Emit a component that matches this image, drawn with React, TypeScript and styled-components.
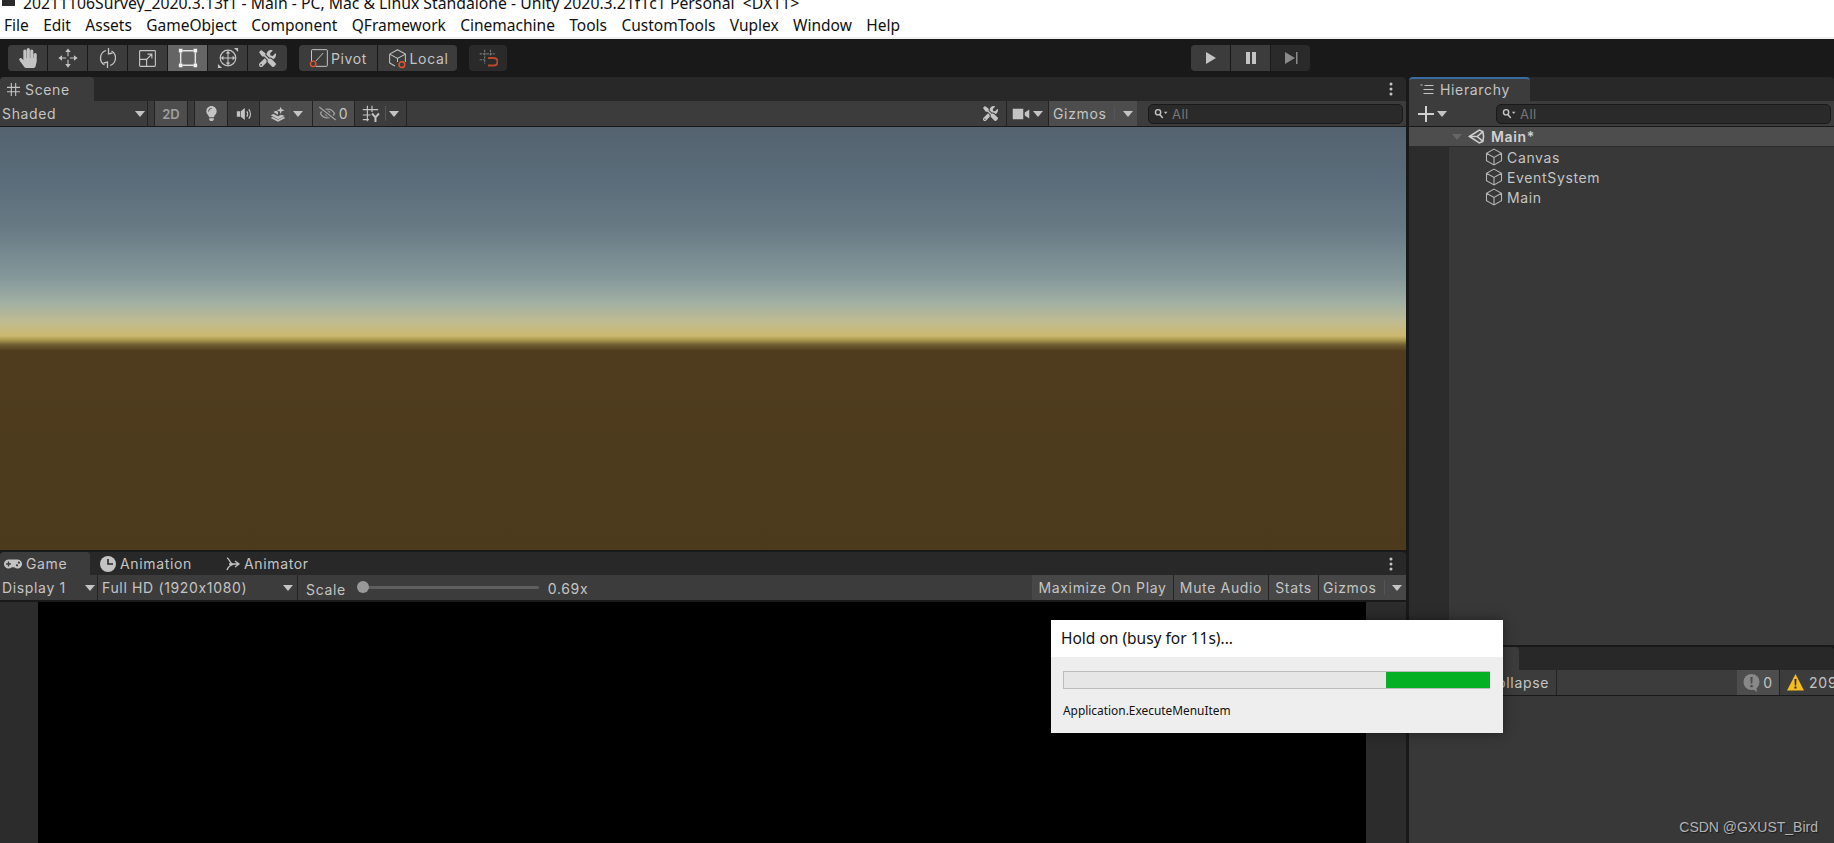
import React from "react"
import styled, { createGlobalStyle } from "styled-components"
import { FaHandPaper, FaTools, FaGamepad, FaLightbulb, FaRegEyeSlash } from "react-icons/fa"

const GlobalStyle = createGlobalStyle`
  html, body {
    margin: 0;
    padding: 0;
    background: #191919;
    overflow: hidden;
  }
  * {
    box-sizing: border-box;
  }
`

const Page = styled.div`
  position: relative;
  width: 1834px;
  height: 843px;
  display: flex;
  flex-direction: column;
  overflow: hidden;
  font-family: Inter, "Liberation Sans", sans-serif;
  font-size: 14px;
  color: #c4c4c4;
`

const TitleBar = styled.div`
  height: 12px;
  flex: none;
  display: flex;
  align-items: flex-end;
  gap: 8px;
  padding-left: 2px;
  background: #fff;
  overflow: hidden;
`

const TitleIcon = styled.span`
  width: 13px;
  height: 6px;
  margin-bottom: 6px;
  background: #2b2b2b;
`

const TitleText = styled.span`
  font-family: "Noto Sans", sans-serif;
  font-size: 15.75px;
  line-height: 18px;
  color: #111;
  white-space: pre;
`

const MenuBar = styled.div`
  height: 27px;
  flex: none;
  display: flex;
  align-items: center;
  gap: 14.4px;
  padding: 1px 0 0 4px;
  background: #fff;
  border-bottom: 2px solid #f0f0f0;
`

const MenuItem = styled.span`
  font-family: "Noto Sans", sans-serif;
  font-size: 15.5px;
  color: #111;
`

const MainToolbar = styled.div`
  height: 38px;
  flex: none;
  display: flex;
  align-items: center;
  padding-left: 8px;
  background: #191919;
`

const ToolGroup = styled.div<{ $gap?: number }>`
  display: flex;
  gap: 1px;
  height: 26px;
  margin-left: ${(p) => p.$gap ?? 0}px;
  border-radius: 4px;
  overflow: hidden;
`

const ToolButton = styled.div<{ $w: number; $active?: boolean; $dim?: boolean }>`
  width: ${(p) => p.$w}px;
  display: flex;
  align-items: center;
  justify-content: center;
  gap: 2px;
  color: #c4c4c4;
  letter-spacing: 0.65px;
  background: ${(p) => (p.$active ? "#656565" : p.$dim ? "#2a2a2a" : "#3c3c3c")};
`

const Workspace = styled.div`
  flex: 1;
  display: flex;
  gap: 3px;
  min-height: 0;
  background: #191919;
`

const LeftColumn = styled.div`
  width: 1406px;
  flex: none;
  display: flex;
  flex-direction: column;
  gap: 2px;
`

const RightColumn = styled.div`
  flex: 1;
  display: flex;
  flex-direction: column;
  gap: 2px;
  min-width: 0;
`

const Panel = styled.section<{ $h?: number }>`
  display: flex;
  flex-direction: column;
  min-height: 0;
  ${(p) => (p.$h ? `height: ${p.$h}px; flex: none;` : "flex: 1;")}
`

const TabRow = styled.div<{ $h: number }>`
  height: ${(p) => p.$h}px;
  flex: none;
  display: flex;
  align-items: stretch;
  background: #282828;
  border-radius: 4px 4px 0 0;
`

const Tab = styled.div<{ $w: number; $active?: boolean; $blue?: boolean; $pad?: number; $gap?: number }>`
  width: ${(p) => p.$w}px;
  display: flex;
  align-items: center;
  gap: ${(p) => p.$gap ?? 4}px;
  padding-left: ${(p) => p.$pad ?? 5}px;
  padding-bottom: 2px;
  background: ${(p) => (p.$active ? "#3c3c3c" : "transparent")};
  border-top: 2px solid ${(p) => (p.$blue ? "#3a6d9f" : "transparent")};
  border-radius: 4px 4px 0 0;
  color: #c4c4c4;
  letter-spacing: 0.65px;
`

const Kebab = styled.div`
  margin-left: auto;
  margin-right: 13px;
  display: flex;
  align-items: center;
`

const Row = styled.div<{ $h: number }>`
  height: ${(p) => p.$h}px;
  flex: none;
  display: flex;
  align-items: stretch;
  background: #3c3c3c;
  border-bottom: 1px solid #191919;
`

const Cell = styled.div<{ $w?: number; $bg?: string; $plain?: boolean; $pad?: number; $between?: boolean }>`
  width: ${(p) => (p.$w ? `${p.$w}px` : "auto")};
  flex: none;
  display: flex;
  align-items: center;
  justify-content: ${(p) => (p.$between ? "space-between" : "center")};
  gap: 3px;
  padding: 0 ${(p) => p.$pad ?? 0}px;
  background: ${(p) => p.$bg ?? "transparent"};
  border-right: ${(p) => (p.$plain ? "none" : "1px solid #232323")};
  letter-spacing: 0.65px;
  white-space: nowrap;
`

const LeftCell = styled(Cell)`
  justify-content: flex-start;
`

const EndCell = styled(Cell)`
  justify-content: flex-end;
`

const DimText = styled.span`
  color: #a0a0a0;
  font-size: 13px;
  font-weight: 600;
  letter-spacing: 0;
`

const ScaleLabel = styled.span`
  margin-top: 3px;
`

const ScaleValue = styled.span`
  margin-left: 6px;
  margin-top: 1px;
`

const Divider = styled.span`
  width: 1px;
  height: 15px;
  background: #555;
`

const Caret = styled.span<{ $dim?: boolean }>`
  width: 0;
  height: 0;
  flex: none;
  border-left: 5px solid transparent;
  border-right: 5px solid transparent;
  border-top: 6px solid ${(p) => (p.$dim ? "#666" : "#c4c4c4")};
`

const Spacer = styled.div`
  flex: 1;
`

const SearchField = styled.div<{ $w?: number; $left: number }>`
  ${(p) => (p.$w ? `width: ${p.$w}px; flex: none;` : "flex: 1;")}
  height: 20px;
  align-self: center;
  display: flex;
  align-items: center;
  gap: 4px;
  margin: 0 3px 0 ${(p) => p.$left}px;
  padding-left: 5px;
  background: #2a2a2a;
  border: 1px solid #191919;
  border-radius: 5px;
  font-size: 13px;
  letter-spacing: 0.5px;
  color: #777;
`

const SceneView = styled.div`
  flex: 1;
  background: linear-gradient(
    180deg,
    #54636f 0,
    #5a6b79 50px,
    #677a84 100px,
    #84979a 150px,
    #a0afa3 175px,
    #c0bc92 195px,
    #cbb86f 209px,
    #a8984f 213px,
    #6e5c32 218px,
    #4f3c1e 224px,
    #4c3a1c 100%
  );
`

const GameView = styled.div`
  flex: 1;
  margin-top: 1px;
  padding: 0 40px 0 38px;
  background: #2c2c2c;
`

const GameBlack = styled.div`
  height: 100%;
  background: #000;
`

const Slider = styled.div`
  position: relative;
  width: 181px;
  height: 3px;
  margin-left: 9px;
  background: #5f5f5f;
  border-radius: 2px;
`

const SliderThumb = styled.span`
  position: absolute;
  left: -1px;
  top: -5px;
  width: 12px;
  height: 12px;
  border-radius: 50%;
  background: #999;
`

const SelectedRow = styled.div`
  height: 20px;
  flex: none;
  display: flex;
  align-items: center;
  padding-left: 43px;
  gap: 6px;
  background: #4d4d4d;
  border-bottom: 1px solid #2c2c2c;
  font-weight: 600;
  color: #d2d2d2;
  letter-spacing: 0.65px;
`

const TreeBody = styled.div`
  flex: 1;
  padding-left: 76px;
  background: linear-gradient(90deg, #2c2c2c 40px, #383838 40px);
`

const TreeRow = styled.div`
  height: 20px;
  display: flex;
  align-items: center;
  gap: 4px;
  letter-spacing: 0.65px;
`

const ConsoleBody = styled.div`
  flex: 1;
  background: #383838;
`

const ConsoleTab = styled.div`
  width: 110px;
  background: #3c3c3c;
  border-radius: 0 4px 0 0;
`

const Count = styled.span`
  letter-spacing: 0.8px;
`

const WarningCell = styled(LeftCell)`
  gap: 5px;
  border-left: 1px solid #232323;
  svg {
    flex: none;
  }
`

const BusyDialog = styled.div`
  position: absolute;
  left: 1051px;
  top: 620px;
  width: 452px;
  height: 113px;
  display: flex;
  flex-direction: column;
  background: #eee;
  box-shadow: 0 0 12px rgba(0, 0, 0, 0.45);
  font-family: "Noto Sans", sans-serif;
  color: #111;
`

const DialogTitle = styled.div`
  height: 37px;
  flex: none;
  display: flex;
  align-items: center;
  padding: 0 0 2px 10px;
  background: #fff;
  font-size: 15.5px;
`

const DialogBody = styled.div`
  flex: 1;
  padding: 14px 13px 0 12px;
`

const ProgressTrack = styled.div`
  height: 18px;
  display: flex;
  justify-content: flex-end;
  background: #e6e6e6;
  border: 1px solid #bcbcbc;
  border-right: none;
`

const ProgressFill = styled.div`
  width: 104px;
  background: #06b025;
`

const DialogLabel = styled.div`
  margin-top: 13px;
  font-size: 11.9px;
`

const Watermark = styled.div`
  position: absolute;
  right: 16px;
  bottom: 8px;
  font-family: "Liberation Sans", sans-serif;
  font-size: 14px;
  color: #b4b4b4;
  text-shadow: 1px 1px 1px #1a1a1a;
`

const Svg: React.FC<{ s?: number; children: React.ReactNode }> = ({ s = 18, children }) => (
  <svg width={s} height={s} viewBox="0 0 24 24" fill="none" stroke="#c4c4c4" strokeWidth="1.6">
    {children}
  </svg>
)

const MoveIcon = () => (
  <Svg s={22}>
    <path d="M12 5v5M12 14v5M5 12h5M14 12h5" strokeWidth="1.2" />
    <path d="M12 1.500l3 4H9zM12 22.500l3-4H9zM1.500 12l4-3v6zM22.500 12l-4-3v6z" fill="#c4c4c4" stroke="none" />
  </Svg>
)

const RotateIcon = () => (
  <Svg s={24}>
    <path d="M10 4.500A8 8 0 0 0 8.500 19M14 19.500A8 8 0 0 0 15.500 5" strokeWidth="1.300" />
    <path d="M12.500 2v6l4-1M11.500 22v-6l-4 1" strokeWidth="1.300" />
  </Svg>
)

const ScaleIcon = () => (
  <Svg s={21}>
    <path d="M4 3h16a1 1 0 0 1 1 1v16a1 1 0 0 1-1 1H4a1 1 0 0 1-1-1V4a1 1 0 0 1 1-1zM3 13h8v8M10 14l7-7M12 7h5v5" strokeWidth="1.300" />
  </Svg>
)

const RectIcon = () => (
  <Svg s={22}>
    <path d="M6 4h12M6 20h12M4 6v12M20 6v12" stroke="#e4e4e4" />
    <path d="M2 2h4v4H2zM18 2h4v4h-4zM2 18h4v4H2zM18 18h4v4h-4z" fill="#f2f2f2" stroke="none" />
  </Svg>
)

const TransformIcon = () => (
  <Svg s={22}>
    <circle cx="12" cy="12" r="8.500" strokeWidth="1.300" />
    <path d="M12 6v12M6 12h12" strokeWidth="1.200" />
    <path d="M12 4l2.500 3h-5zM12 20l2.500-3h-5zM4 12l3-2.500v5zM20 12l-3-2.500v5zM18.500 1H23v4.500zM1 23v-4.500L5.500 23z" fill="#c4c4c4" stroke="none" />
  </Svg>
)

const OrangeDot = ({ cx, cy }: { cx: number; cy: number }) => (
  <circle cx={cx} cy={cy} r="3.300" stroke="#e0552f" strokeWidth="1.700" fill="#3c3c3c" />
)

const PivotIcon = () => (
  <Svg s={20}>
    <path d="M4 2h17a1 1 0 0 1 1 1v18a1 1 0 0 1-1 1H8M3 16V3a1 1 0 0 1 1-1M8 16L17 6" strokeWidth="1.200" />
    <OrangeDot cx={5} cy={19} />
  </Svg>
)

const LocalIcon = () => (
  <Svg s={21}>
    <path d="M12 2l9 5v9M3 7l9-5M3 7v10l6 3.500M3 7l9 5 9-5M12 12v4" strokeWidth="1.200" />
    <OrangeDot cx={17} cy={19} />
  </Svg>
)

const SnapIcon = () => (
  <Svg s={20}>
    <path d="M8 2v17M15 2v7M2 7h18M2 14h6" stroke="#777" strokeWidth="1.300" strokeDasharray="3 1" />
    <path d="M12 12h7a3.500 3.500 0 0 1 0 9h-7" stroke="#b64a2a" strokeWidth="2.600" />
  </Svg>
)

const AudioIcon = () => (
  <svg width="17" height="16" viewBox="0 0 24 24" fill="#c4c4c4">
    <path d="M2 8h5v8H2zM8 8l6-5v18l-6-5z" />
    <path d="M17 8c1.500 2 1.500 6 0 8M20 5c3 4 3 10 0 14" stroke="#c4c4c4" strokeWidth="2" fill="none" />
  </svg>
)

const EffectsIcon = () => (
  <svg width="16" height="16" viewBox="0 0 24 24" fill="#c4c4c4">
    <path d="M1 14l4-2 7 3.500L17 13l5 2-10 5zM1 18l3-1.500 8 4 8-4 3 1.500-11 5.500z" />
    <path d="M5 9l4-2 3 1.500V13zM16 1l1.500 4L22 6.500 17.500 8 16 12l-1.500-4L10 6.500 14.500 5z" />
  </svg>
)

const GridYIcon = () => (
  <svg width="20" height="19" viewBox="0 0 26 24" fill="none" stroke="#c4c4c4" strokeWidth="1.500">
    <path d="M7 2v20M13 2v8M1 7h20M1 14h10M1 20h8" />
    <path d="M13 12l4.500 5 4.500-5M17.500 17v6" strokeWidth="2.600" />
  </svg>
)

const CameraIcon = () => (
  <svg width="18" height="16" viewBox="0 0 24 20" fill="#c4c4c4">
    <path d="M1 3h14v14H1zM17 8l6-4v12l-6-4z" />
  </svg>
)

const SearchIcon = () => (
  <svg width="14" height="12" viewBox="0 0 24 20" fill="none" stroke="#c4c4c4" strokeWidth="2.500">
    <circle cx="7" cy="7" r="4.500" />
    <path d="M10 11l5 6" />
    <path d="M17 6h6l-3 4z" fill="#c4c4c4" stroke="none" />
  </svg>
)

const KebabIcon = () => (
  <svg width="4" height="14" viewBox="0 0 4 14" fill="#c4c4c4">
    <circle cx="2" cy="2" r="1.500" />
    <circle cx="2" cy="7" r="1.500" />
    <circle cx="2" cy="12" r="1.500" />
  </svg>
)

const GridTabIcon = () => (
  <svg width="13" height="13" viewBox="0 0 12 12" stroke="#c4c4c4" strokeWidth="1">
    <path d="M4 0v12M8 0v12M0 4h12M0 8h12" />
  </svg>
)

const ClockIcon = () => (
  <svg width="16" height="16" viewBox="0 0 16 16">
    <circle cx="8" cy="8" r="8" fill="#c4c4c4" />
    <path d="M8 3v5h5" stroke="#282828" strokeWidth="1.600" fill="none" />
  </svg>
)

const AnimatorIcon = () => (
  <svg width="14" height="14" viewBox="0 0 14 14" fill="none" stroke="#c4c4c4" strokeWidth="1.300">
    <path d="M1 1c2 0 3 6 6 6s-4 0-6 6M3 7h9M9 4l4 3-4 3" />
  </svg>
)

const ListIcon = () => (
  <svg width="14" height="11" viewBox="0 0 13 11" stroke="#c4c4c4" strokeWidth="1.100">
    <path d="M0 1h2M4 1.500h9M3 5.500h10M3 9.500h10" />
  </svg>
)

const PlusIcon = () => (
  <svg width="16" height="16" viewBox="0 0 16 16" stroke="#d0d0d0" strokeWidth="2">
    <path d="M8 0v16M0 8h16" />
  </svg>
)

const UnityIcon = () => (
  <svg width="17" height="17" viewBox="0 0 24 24" fill="none" stroke="#d0d0d0" strokeWidth="2.200">
    <path d="M2 12L16 3l5 2 1 7-1 7-5 2z" />
    <path d="M2 12h11l8-7M13 12l8 7" />
  </svg>
)

const CubeIcon = () => (
  <svg width="18" height="18" viewBox="0 0 24 24" fill="none" stroke="#b4b4b4" strokeWidth="1.500">
    <path d="M12 1.500l10 5.500v10l-10 5.500-10-5.500V7zM2 7l10 5.500L22 7M12 12.500V23" />
  </svg>
)

const ErrorIcon = () => (
  <svg width="17" height="18" viewBox="0 0 17 18">
    <path d="M8 14l6 4-1-6z" fill="#888" />
    <circle cx="8.500" cy="8" r="8" fill="#888" />
    <path d="M7.300 3h2.400l-.4 6.500H7.700zM7.300 11h2.400v2.200H7.300z" fill="#4d4d4d" />
  </svg>
)

const WarningIcon = () => (
  <svg width="17" height="17" viewBox="0 0 17 17">
    <path d="M8.500 0L17 16.500H0z" fill="#f5bd1f" />
    <path d="M7.500 5h2l-.3 6.500H7.800zM7.500 12.500h2v2h-2z" fill="#2b2b2b" />
  </svg>
)

const PlayIcon = () => (
  <svg width="12" height="14" viewBox="0 0 12 14" fill="#c4c4c4">
    <path d="M1 1l10 6-10 6z" />
  </svg>
)

const PauseIcon = () => (
  <svg width="12" height="14" viewBox="0 0 12 14" fill="#c4c4c4">
    <path d="M1 1h4v12H1zM7 1h4v12H7z" />
  </svg>
)

const StepIcon = () => (
  <svg width="14" height="14" viewBox="0 0 14 14" fill="#8a8a8a">
    <path d="M1 1l10 6-10 6zM12 1h1.500v12H12z" />
  </svg>
)

const menus = [
  "File", "Edit", "Assets", "GameObject", "Component", "QFramework",
  "Cinemachine", "Tools", "CustomTools", "Vuplex", "Window", "Help",
]

const App: React.FC = () => (
  <Page>
    <GlobalStyle />
    <TitleBar>
      <TitleIcon />
      <TitleText>20211106Survey_2020.3.13f1 - Main - PC, Mac &amp; Linux Standalone - Unity 2020.3.21f1c1 Personal  &lt;DX11&gt;</TitleText>
    </TitleBar>
    <MenuBar>
      {menus.map((m) => (
        <MenuItem key={m}>{m}</MenuItem>
      ))}
    </MenuBar>
    <MainToolbar>
      <ToolGroup>
        <ToolButton $w={39}><FaHandPaper size={20} /></ToolButton>
        <ToolButton $w={39}><MoveIcon /></ToolButton>
        <ToolButton $w={39}><RotateIcon /></ToolButton>
        <ToolButton $w={39}><ScaleIcon /></ToolButton>
        <ToolButton $w={39} $active><RectIcon /></ToolButton>
        <ToolButton $w={39}><TransformIcon /></ToolButton>
        <ToolButton $w={39}><FaTools size={17} /></ToolButton>
      </ToolGroup>
      <ToolGroup $gap={12}>
        <ToolButton $w={78}><PivotIcon />Pivot</ToolButton>
        <ToolButton $w={79}><LocalIcon />Local</ToolButton>
      </ToolGroup>
      <ToolGroup $gap={12}>
        <ToolButton $w={38} $dim><SnapIcon /></ToolButton>
      </ToolGroup>
      <ToolGroup $gap={684}>
        <ToolButton $w={39}><PlayIcon /></ToolButton>
        <ToolButton $w={39}><PauseIcon /></ToolButton>
        <ToolButton $w={39} $dim><StepIcon /></ToolButton>
      </ToolGroup>
    </MainToolbar>
    <Workspace>
      <LeftColumn>
        <Panel $h={473}>
          <TabRow $h={24}>
            <Tab $w={94} $active $pad={7} $gap={5}><GridTabIcon />Scene</Tab>
            <Kebab><KebabIcon /></Kebab>
          </TabRow>
          <Row $h={26}>
            <Cell $w={148} $pad={2} $between>Shaded<Caret /></Cell>
            <Cell $w={7} />
            <Cell $w={33} $bg="#4d4d4d"><DimText>2D</DimText></Cell>
            <Cell $w={7} />
            <Cell $w={33} $bg="#4d4d4d"><FaLightbulb size={15} /></Cell>
            <Cell $w={32}><AudioIcon /></Cell>
            <Cell $w={53} $bg="#4d4d4d"><EffectsIcon /><Divider /><Caret /></Cell>
            <Cell $w={42} $bg="#4d4d4d"><FaRegEyeSlash size={17} color="#a0a0a0" /><Count>0</Count></Cell>
            <Cell $w={52}><GridYIcon /><Divider /><Caret /></Cell>
            <Spacer />
            <Cell $w={33}><FaTools size={15} /></Cell>
            <Cell $w={42}><CameraIcon /><Caret /></Cell>
            <Cell $w={88} $bg="#4d4d4d" $plain $pad={4} $between>Gizmos<Divider /><Caret /></Cell>
            <SearchField $w={255} $left={11}><SearchIcon />All</SearchField>
          </Row>
          <SceneView />
        </Panel>
        <Panel>
          <TabRow $h={23}>
            <Tab $w={90} $active $pad={4}><FaGamepad size={18} />Game</Tab>
            <Tab $w={122} $pad={10}><ClockIcon />Animation</Tab>
            <Tab $w={100} $pad={14}><AnimatorIcon />Animator</Tab>
            <Kebab><KebabIcon /></Kebab>
          </TabRow>
          <Row $h={26}>
            <Cell $w={98} $pad={2} $between>Display 1<Caret /></Cell>
            <Cell $w={200} $pad={4} $between>Full HD (1920x1080)<Caret /></Cell>
            <Cell $pad={8} $plain>
              <ScaleLabel>Scale</ScaleLabel>
              <Slider><SliderThumb /></Slider>
              <ScaleValue>0.69x</ScaleValue>
            </Cell>
            <Spacer />
            <Cell $w={142} $bg="#474747">Maximize On Play</Cell>
            <Cell $w={95} $bg="#474747">Mute Audio</Cell>
            <Cell $w={50} $bg="#474747">Stats</Cell>
            <Cell $w={87} $bg="#474747" $plain $pad={4} $between>Gizmos<Divider /><Caret /></Cell>
          </Row>
          <GameView>
            <GameBlack />
          </GameView>
        </Panel>
      </LeftColumn>
      <RightColumn>
        <Panel $h={568}>
          <TabRow $h={24}>
            <Tab $w={121} $active $blue $pad={11} $gap={6}><ListIcon />Hierarchy</Tab>
          </TabRow>
          <Row $h={26}>
            <LeftCell $w={87} $plain $pad={9}><PlusIcon /><Caret /></LeftCell>
            <SearchField $left={0}><SearchIcon />All</SearchField>
          </Row>
          <SelectedRow><Caret $dim /><UnityIcon />Main*</SelectedRow>
          <TreeBody>
            <TreeRow><CubeIcon />Canvas</TreeRow>
            <TreeRow><CubeIcon />EventSystem</TreeRow>
            <TreeRow><CubeIcon />Main</TreeRow>
          </TreeBody>
        </Panel>
        <Panel>
          <TabRow $h={23}>
            <ConsoleTab />
          </TabRow>
          <Row $h={26}>
            <EndCell $w={148} $pad={7}>Collapse</EndCell>
            <Spacer />
            <Cell $w={42} $bg="#4d4d4d" $plain><ErrorIcon /><Count>0</Count></Cell>
            <WarningCell $w={55} $pad={7} $plain><WarningIcon /><Count>209</Count></WarningCell>
          </Row>
          <ConsoleBody />
        </Panel>
      </RightColumn>
    </Workspace>
    <BusyDialog>
      <DialogTitle>Hold on (busy for 11s)...</DialogTitle>
      <DialogBody>
        <ProgressTrack><ProgressFill /></ProgressTrack>
        <DialogLabel>Application.ExecuteMenuItem</DialogLabel>
      </DialogBody>
    </BusyDialog>
    <Watermark>CSDN @GXUST_Bird</Watermark>
  </Page>
)

export default App
